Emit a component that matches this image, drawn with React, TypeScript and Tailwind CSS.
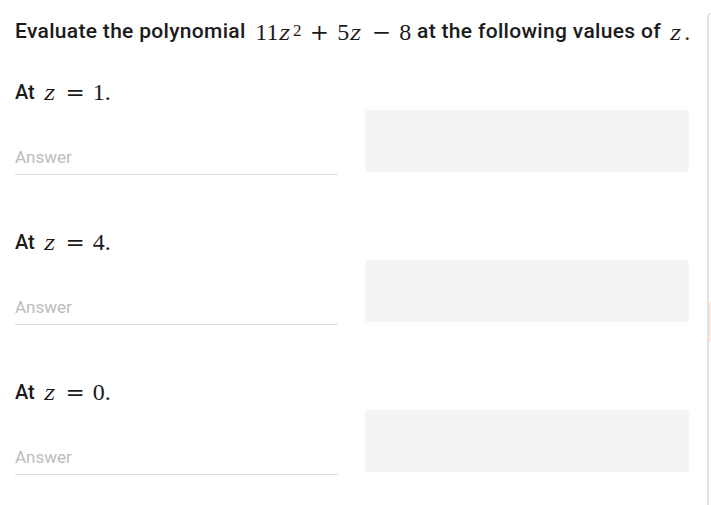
import type { ReactNode } from "react";

const mathFont = { fontFamily: '"Liberation Serif", "DejaVu Serif", serif' };
const opFont = { fontFamily: '"DejaVu Serif", "Liberation Serif", serif' };

function M(props: { children: ReactNode }) {
  return (
    <span className="ml-[4px] text-[24px] font-normal leading-none" style={mathFont}>
      {props.children}
    </span>
  );
}

// slanted with a transform so it reads as math italic whatever faces are installed
function Z() {
  return (
    <span className="inline-block not-italic -skew-x-12 pl-[1px] pr-[2px]">z</span>
  );
}

function Op(props: { children: ReactNode }) {
  return (
    <span className="px-[8px] text-[23px]" style={opFont}>
      {props.children}
    </span>
  );
}

interface PartProps {
  value: string;
}

function Part(props: PartProps) {
  return (
    <div className="flex flex-col">
      <div className="h-[28px] flex items-center text-[20px] font-medium text-[#1b1b1b]">
        <span>At&nbsp;</span>
        <M>
          <Z />
          <Op>=</Op>
          {props.value}.
        </M>
      </div>
      <div className="grid grid-cols-[323px_324px] gap-[27px] mt-[4px]">
        <div className="h-[65px] flex flex-col justify-end">
          <input
            className="h-[36px] w-full border-b border-[#dcdcdc] outline-0 text-[17px] text-[#333] placeholder:text-[#bcbcbc]"
            placeholder="Answer"
            type="text"
          />
        </div>
        <div className="h-[62px] rounded-[4px] bg-[#f3f3f3]" />
      </div>
    </div>
  );
}

function App() {
  return (
    <div
      className="w-[711px] h-[505px] overflow-hidden bg-white flex"
      style={{ fontFamily: 'Roboto, "Liberation Sans", sans-serif' }}
    >
      <div className="flex-1 pl-[15px] pt-[17px]">
        <h1 className="h-[30px] flex items-center text-[21px] font-medium tracking-[0.015em] text-[#1b1b1b] whitespace-nowrap">
          <span>Evaluate the polynomial&nbsp;</span>
          <M>
            11<Z />
            <sup className="text-[17px] relative -top-[4px]">2</sup>
            <Op>+</Op>5<Z />
            <Op>−</Op>8
          </M>
          <span>&nbsp;at the following values of&nbsp;</span>
          <M>
            <Z />.
          </M>
        </h1>
        <div className="flex flex-col gap-[53px] mt-[31px]">
          <Part value="1" />
          <Part value="4" />
          <Part value="0" />
        </div>
      </div>
      <div className="w-[4px] mt-[13px] border-l-2 border-t border-[#e2e2e2] rounded-tl-[6px] flex flex-col">
        <div className="h-[288px]" />
        <div className="h-[40px] bg-[#fde8df]" />
      </div>
    </div>
  );
}

export default App;
